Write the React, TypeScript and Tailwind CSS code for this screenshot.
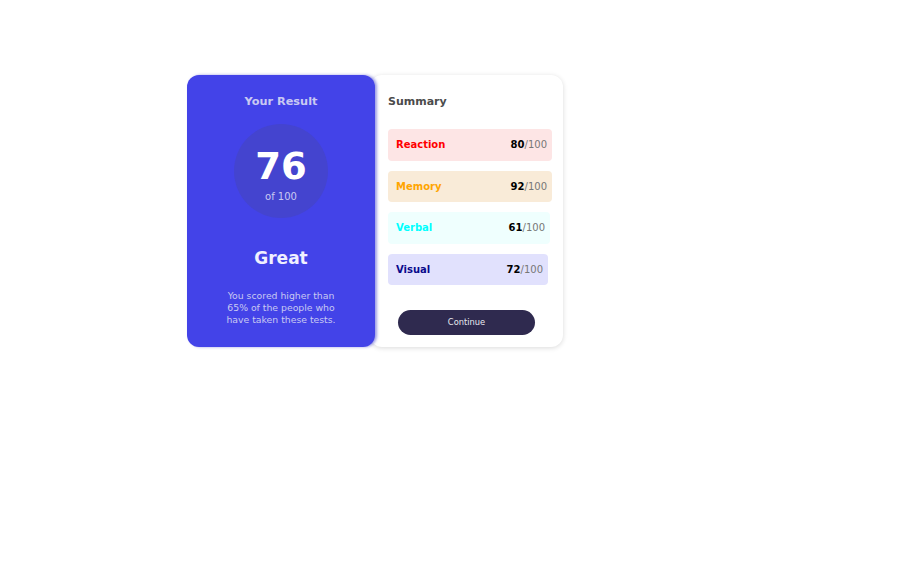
export default function App() {
  const items = [
    { label: "Reaction", score: 80, bg: "bg-[#fde5e5]", fg: "text-[#ff0000]", w: "w-[164px]" },
    { label: "Memory", score: 92, bg: "bg-[#f9ebd8]", fg: "text-[#ffa500]", w: "w-[164px]" },
    { label: "Verbal", score: 61, bg: "bg-[#effffe]", fg: "text-[#00ffff]", w: "w-[162px]" },
    { label: "Visual", score: 72, bg: "bg-[#e1e1fd]", fg: "text-[#0a0a8c]", w: "w-[160px]" },
  ];
  return (
    <div
      className="w-[900px] h-[563px] bg-white pt-[75px] pl-[187px]"
      style={{ fontFamily: '"DejaVu Sans", sans-serif' }}
    >
      <div className="flex">
        <div className="relative z-10 w-[188px] h-[272px] shrink-0 rounded-[12px] bg-[#4343e8] shadow-[2px_0_3px_rgba(60,60,200,0.5)] flex flex-col items-center">
          <div className="mt-[20px] text-[11.3px] font-bold text-[#c9c9f2] leading-[14px]">Your Result</div>
          <div className="mt-[15px] w-[94px] h-[94px] shrink-0 rounded-full bg-[#4444cf] flex flex-col items-center">
            <div className="mt-[22px] text-[37px] leading-[42px] font-bold text-white">76</div>
            <div className="mt-[3px] text-[10px] leading-[12px] text-[#c9c9f2]">of 100</div>
          </div>
          <div className="mt-[29px] text-[17px] leading-[22px] font-bold text-[#f0f0ff]">Great</div>
          <div className="mt-[21px] w-[120px] text-center text-[9.3px] leading-[12px] text-[#c9c9f2]">
            You scored higher than 65% of the people who have taken these tests.
          </div>
        </div>
        <div className="-ml-[5px] w-[193px] h-[272px] shrink-0 rounded-[12px] bg-white shadow-[0_1px_5px_rgba(0,0,0,0.15)] pl-[18px] flex flex-col">
          <div className="mt-[20px] text-[11px] leading-[14px] font-bold text-[#4b4b4b]">Summary</div>
          <div className="mt-[20px] flex flex-col gap-[10px]">
            {items.map((it) => (
              <div key={it.label} className={`${it.w} h-[31.5px] shrink-0 rounded-[4px] ${it.bg} flex items-center justify-between pl-[8px] pr-[5px]`}>
                <span className={`text-[10px] font-bold ${it.fg}`}>{it.label}</span>
                <span className="text-[10px]">
                  <span className="font-bold text-black">{it.score}</span>
                  <span className="text-[#777]">/100</span>
                </span>
              </div>
            ))}
          </div>
          <div className="mt-[25px] ml-[10px] w-[137px] h-[25px] shrink-0 rounded-full bg-[#2f2a4f] flex items-center justify-center text-[8.3px] text-[#e8e8f0]">
            Continue
          </div>
        </div>
      </div>
    </div>
  );
}
